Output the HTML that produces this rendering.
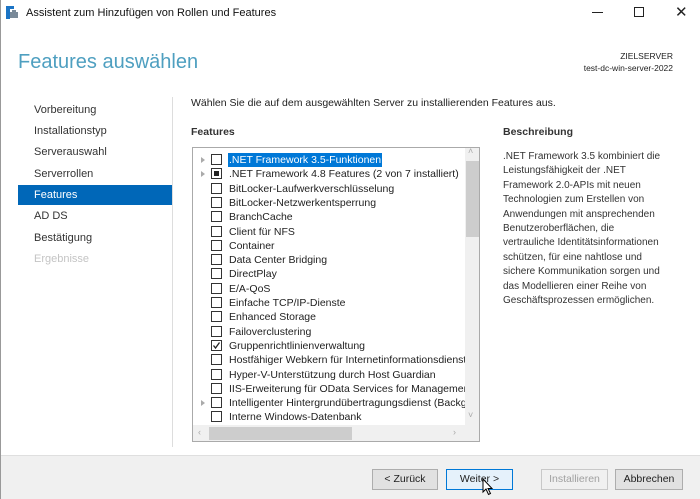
<!DOCTYPE html>
<html><head><meta charset="utf-8"><style>
*{margin:0;padding:0;box-sizing:border-box}
body{width:700px;height:499px;overflow:hidden;background:#fff;font-family:"Liberation Sans",sans-serif;color:#1e1e1e;position:relative;font-size:10.5px}
.abs{position:absolute;white-space:nowrap}
.nav{position:absolute;left:34px;font-size:11px;color:#333}
.row{position:absolute;left:0;height:14px;line-height:14px}
.cb{position:absolute;left:18px;top:1px;width:11px;height:11px;border:1px solid #333;background:#fff}
.lbl{position:absolute;left:36px;top:0;white-space:nowrap;font-size:10.5px;color:#1e1e1e}
.tri{position:absolute;left:8px;top:4px;width:0;height:0;border-left:4px solid #aaa;border-top:3px solid transparent;border-bottom:3px solid transparent}
.btn{position:absolute;top:469px;height:21px;border:1px solid #adadad;background:#e1e1e1;font-size:10.5px;text-align:center;line-height:19px}
</style></head><body>
<div style="position:absolute;left:0;top:0;width:1px;height:499px;background:#999"></div>
<svg class="abs" style="left:5px;top:6px" width="14" height="14"><rect x="1" y="0" width="4" height="13" fill="#1b74c5"/><rect x="5" y="0" width="4" height="3" fill="#1b74c5"/><rect x="5" y="6" width="8" height="6" fill="#7a8a99"/><rect x="7" y="4" width="4" height="2" fill="#7a8a99"/></svg>
<div class="abs" style="left:26px;top:7px;font-size:11px;color:#111">Assistent zum Hinzufügen von Rollen und Features</div>
<div class="abs" style="left:592px;top:12px;width:11px;height:1px;background:#222"></div>
<div class="abs" style="left:634px;top:7px;width:10px;height:10px;border:1px solid #222"></div>
<div class="abs" style="left:675px;top:3px;font-size:15px;color:#222">✕</div>
<div class="abs" style="left:18px;top:51px;font-size:20px;color:#4e9fc0;font-weight:300">Features auswählen</div>
<div class="abs" style="right:27px;top:50px;font-size:8.5px;color:#222;text-align:right;line-height:12px">ZIELSERVER<br>test-dc-win-server-2022</div>
<div class="abs" style="left:172px;top:97px;width:1px;height:350px;background:#ddd"></div>
<div class="nav" style="top:104px">Vorbereitung</div>
<div class="nav" style="top:125px">Installationstyp</div>
<div class="nav" style="top:146px">Serverauswahl</div>
<div class="nav" style="top:168px">Serverrollen</div>
<div class="abs" style="left:18px;top:185px;width:154px;height:20px;background:#0067b8"></div>
<div class="nav" style="top:189px;color:#fff">Features</div>
<div class="nav" style="top:210px">AD DS</div>
<div class="nav" style="top:232px">Bestätigung</div>
<div class="nav" style="top:253px;color:#c4c4c4">Ergebnisse</div>
<div class="abs" style="left:191px;top:97px;font-size:10.5px">Wählen Sie die auf dem ausgewählten Server zu installierenden Features aus.</div>
<div class="abs" style="left:191px;top:126px;font-size:10.5px;font-weight:bold;color:#333">Features</div>
<div class="abs" style="left:503px;top:126px;font-size:10.5px;font-weight:bold;color:#333">Beschreibung</div>
<div class="abs" style="left:503px;top:150px;font-size:10px;line-height:14.4px;color:#333">.NET Framework 3.5 kombiniert die<br>Leistungsfähigkeit der .NET<br>Framework 2.0-APIs mit neuen<br>Technologien zum Erstellen von<br>Anwendungen mit ansprechenden<br>Benutzeroberflächen, die<br>vertrauliche Identitätsinformationen<br>schützen, für eine nahtlose und<br>sichere Kommunikation sorgen und<br>das Modellieren einer Reihe von<br>Geschäftsprozessen ermöglichen.</div>
<div class="abs" style="left:192px;top:147px;width:288px;height:295px;border:1px solid #aaa;overflow:hidden">
 <div style="position:absolute;left:0;top:5px;width:272px;height:271px;overflow:hidden">
  <div class="row" style="top:0"><div class="tri"></div><div class="cb"></div><div class="lbl" style="background:#0078d7;color:#fff;left:35px;padding:0 1px">.NET Framework 3.5-Funktionen</div></div>
  <div class="row" style="top:14.3px"><div class="tri"></div><div class="cb"><div style="position:absolute;left:2px;top:2px;width:5px;height:5px;background:#222"></div></div><div class="lbl">.NET Framework 4.8 Features (2 von 7 installiert)</div></div>
  <div class="row" style="top:28.6px"><div class="cb"></div><div class="lbl">BitLocker-Laufwerkverschlüsselung</div></div>
  <div class="row" style="top:42.9px"><div class="cb"></div><div class="lbl">BitLocker-Netzwerkentsperrung</div></div>
  <div class="row" style="top:57.2px"><div class="cb"></div><div class="lbl">BranchCache</div></div>
  <div class="row" style="top:71.5px"><div class="cb"></div><div class="lbl">Client für NFS</div></div>
  <div class="row" style="top:85.8px"><div class="cb"></div><div class="lbl">Container</div></div>
  <div class="row" style="top:100.1px"><div class="cb"></div><div class="lbl">Data Center Bridging</div></div>
  <div class="row" style="top:114.4px"><div class="cb"></div><div class="lbl">DirectPlay</div></div>
  <div class="row" style="top:128.7px"><div class="cb"></div><div class="lbl">E/A-QoS</div></div>
  <div class="row" style="top:143px"><div class="cb"></div><div class="lbl">Einfache TCP/IP-Dienste</div></div>
  <div class="row" style="top:157.3px"><div class="cb"></div><div class="lbl">Enhanced Storage</div></div>
  <div class="row" style="top:171.6px"><div class="cb"></div><div class="lbl">Failoverclustering</div></div>
  <div class="row" style="top:185.9px"><div class="cb"><svg style="position:absolute;left:0;top:0" width="9" height="9"><path d="M1.5 4.5 L3.5 7 L7.5 1.5" stroke="#222" stroke-width="1.3" fill="none"/></svg></div><div class="lbl">Gruppenrichtlinienverwaltung</div></div>
  <div class="row" style="top:200.2px"><div class="cb"></div><div class="lbl">Hostfähiger Webkern für Internetinformationsdienste</div></div>
  <div class="row" style="top:214.5px"><div class="cb"></div><div class="lbl">Hyper-V-Unterstützung durch Host Guardian</div></div>
  <div class="row" style="top:228.8px"><div class="cb"></div><div class="lbl">IIS-Erweiterung für OData Services for Management</div></div>
  <div class="row" style="top:243.1px"><div class="tri"></div><div class="cb"></div><div class="lbl">Intelligenter Hintergrundübertragungsdienst (Background)</div></div>
  <div class="row" style="top:257.4px"><div class="cb"></div><div class="lbl">Interne Windows-Datenbank</div></div>
 </div>
 <div style="position:absolute;left:272px;top:0;width:15px;height:277px;background:#f0f0f0"></div>
 <div style="position:absolute;left:273px;top:13px;width:13px;height:76px;background:#cdcdcd"></div>
 <div style="position:absolute;left:275px;top:-2px;font-size:9px;color:#aaa">˄</div>
 <div style="position:absolute;left:275px;top:262px;font-size:9px;color:#aaa">˅</div>
 <div style="position:absolute;left:0;top:277px;width:287px;height:17px;background:#f0f0f0"></div>
 <div style="position:absolute;left:16px;top:279px;width:143px;height:13px;background:#cdcdcd"></div>
 <div style="position:absolute;left:5px;top:279px;font-size:9px;color:#aaa">‹</div>
 <div style="position:absolute;left:260px;top:279px;font-size:9px;color:#aaa">›</div>
</div>
<div class="abs" style="left:1px;top:455px;width:699px;height:44px;background:#f0f0f0;border-top:1px solid #dfdfdf"></div>
<div class="btn" style="left:372px;width:66px">&lt; Zurück</div>
<div class="btn" style="left:446px;width:67px;background:#e5f1fb;border-color:#0078d7">Weiter &gt;</div>
<div class="btn" style="left:541px;width:67px;background:#f0f0f0;border-color:#c8c8c8;color:#a0a0a0">Installieren</div>
<div class="btn" style="left:615px;width:68px">Abbrechen</div>
<svg class="abs" style="left:482px;top:478px" width="12" height="18"><path d="M1 1 L1 14 L4 11 L6.5 16.5 L8.5 15.5 L6 10.5 L10 10.5 Z" fill="#fff" stroke="#000" stroke-width="1"/></svg>
</body></html>
